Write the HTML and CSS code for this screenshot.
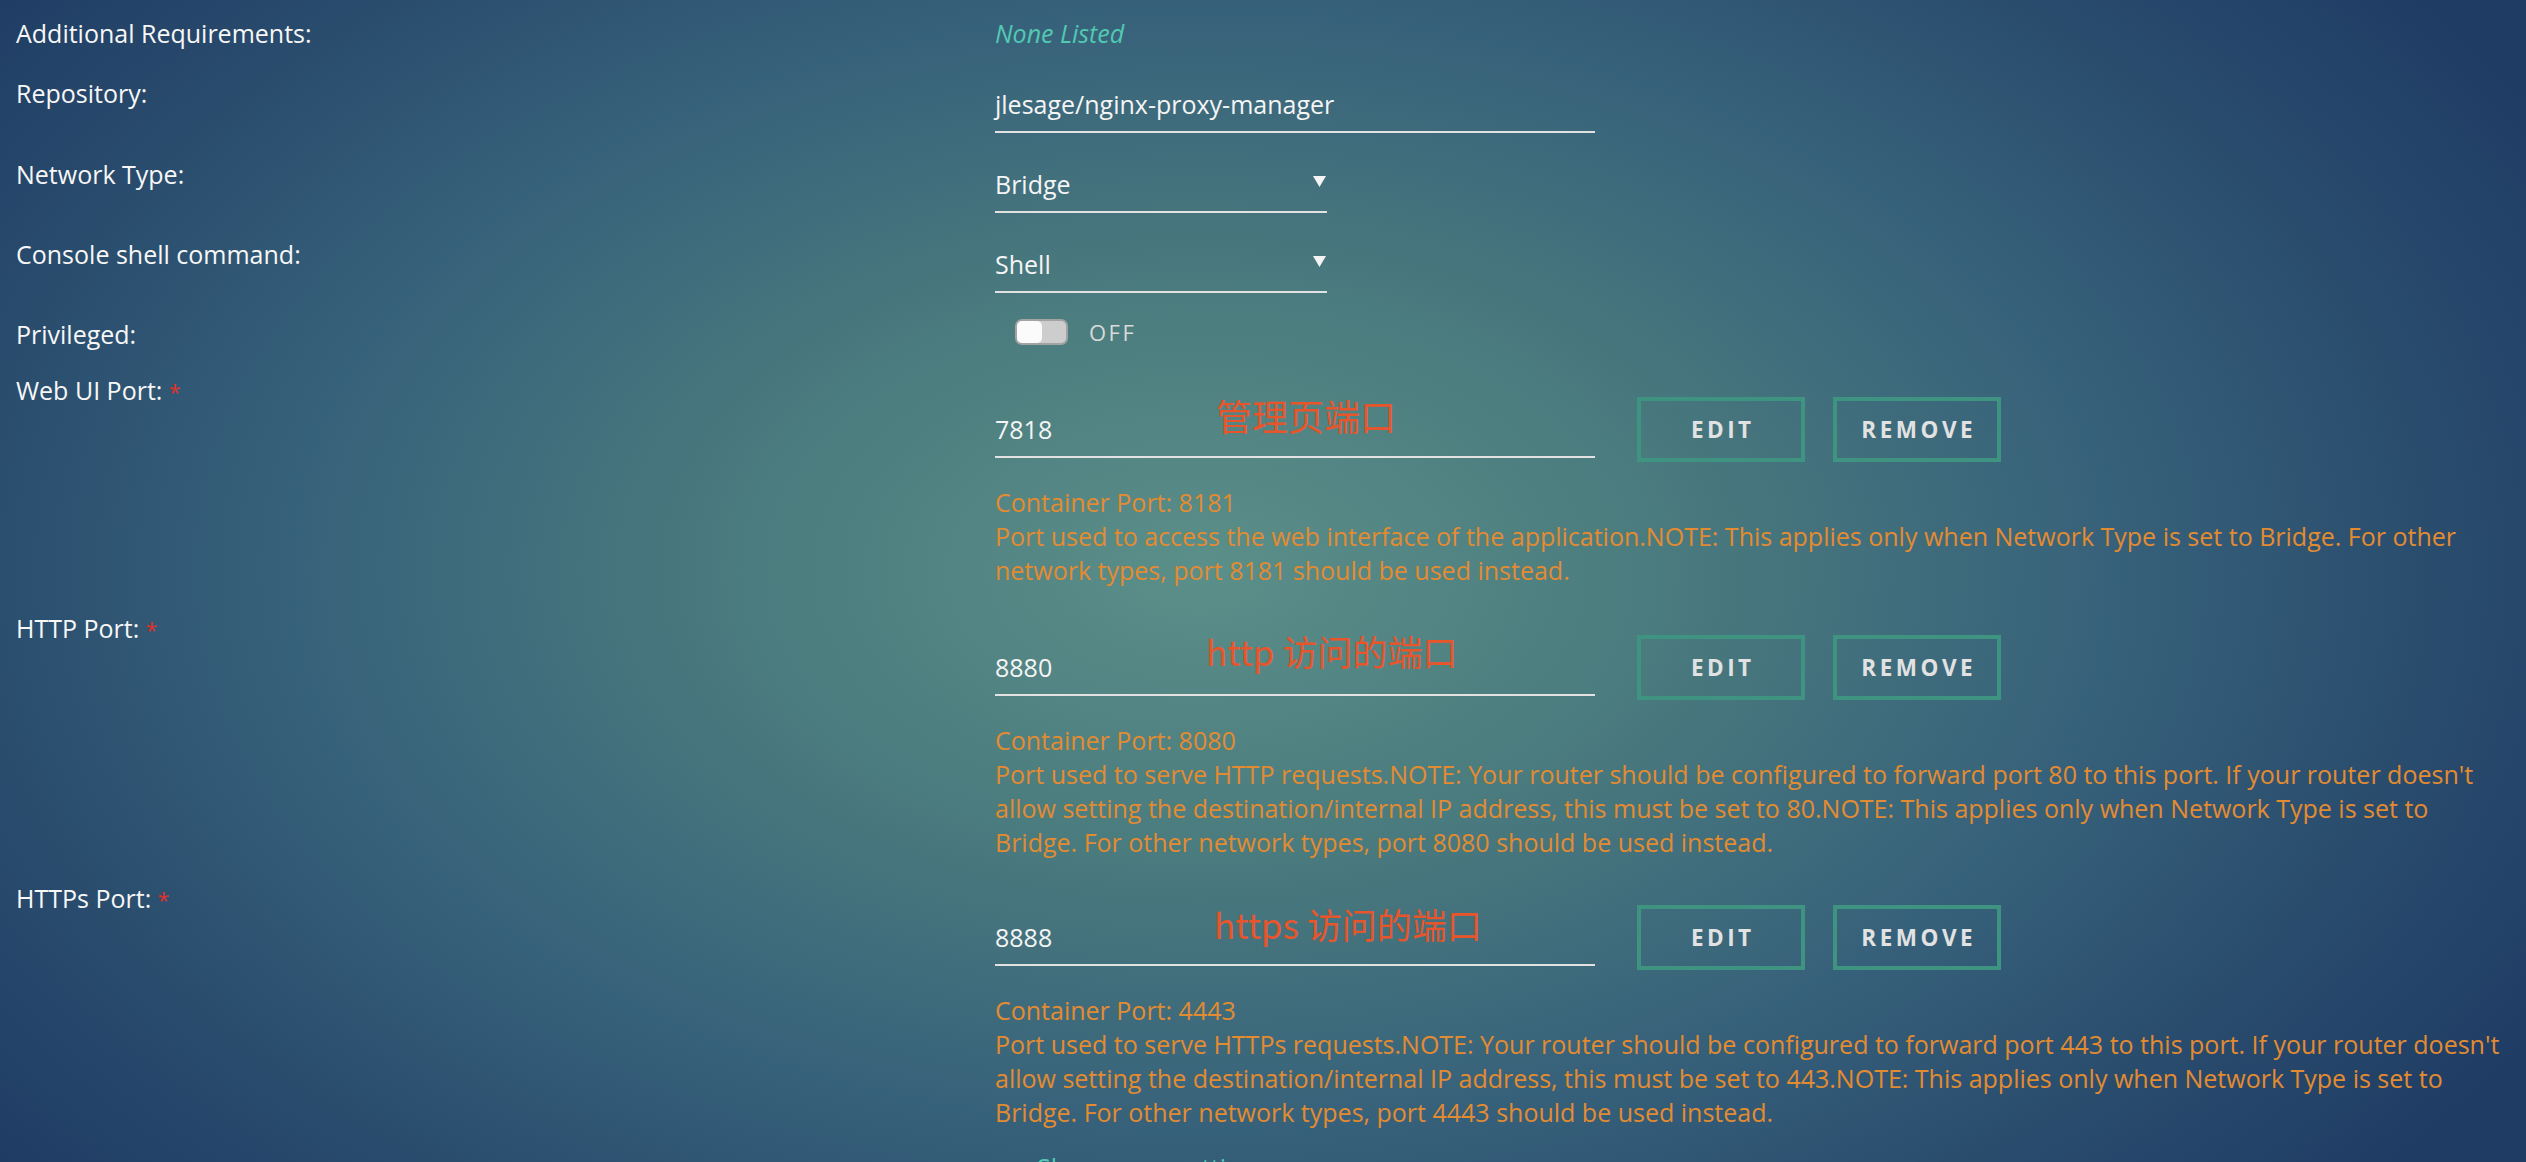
FILE: index.html
```html
<!DOCTYPE html>
<html lang="en">
<head>
<meta charset="utf-8">
<title>Container settings</title>
<link rel="stylesheet" href="styles.css">
</head>
<body>
<div class="form">
  <div class="row row-first">
    <div class="label">Additional Requirements:</div>
    <div class="value"><span class="none">None Listed</span></div>
  </div>
  <div class="row">
    <div class="label">Repository:</div>
    <div class="value"><div class="text-input wide top-input">jlesage/nginx-proxy-manager</div></div>
  </div>
  <div class="row">
    <div class="label">Network Type:</div>
    <div class="value">
      <div class="select">
        <span>Bridge</span>
        <svg class="arrow" width="13" height="11" viewBox="0 0 13 11"><polygon points="0,0 13,0 6.5,11" fill="#f4f4f4"/></svg>
      </div>
    </div>
  </div>
  <div class="row">
    <div class="label">Console shell command:</div>
    <div class="value">
      <div class="select">
        <span>Shell</span>
        <svg class="arrow" width="13" height="11" viewBox="0 0 13 11"><polygon points="0,0 13,0 6.5,11" fill="#f4f4f4"/></svg>
      </div>
    </div>
  </div>
  <div class="row row-priv">
    <div class="label">Privileged:</div>
    <div class="value">
      <div class="switch-wrap">
        <div class="switch"><div class="knob"></div></div>
        <span class="switch-text">OFF</span>
      </div>
    </div>
  </div>
  <div class="row">
    <div class="label">Web UI Port: <span class="req">*</span></div>
    <div class="value">
      <div class="port-line">
        <div class="text-input wide port-input">7818</div>
        <button class="btn btn-edit">Edit</button>
        <button class="btn">Remove</button>
        <span class="note note-ui">管理页端口</span>
      </div>
      <div class="desc">
        <div>Container Port: 8181</div>
        <div>Port used to access the web interface of the application.NOTE: This applies only when Network Type is set to Bridge. For other network types, port 8181 should be used instead.</div>
      </div>
    </div>
  </div>
  <div class="row row-http">
    <div class="label">HTTP Port: <span class="req">*</span></div>
    <div class="value">
      <div class="port-line">
        <div class="text-input wide port-input">8880</div>
        <button class="btn btn-edit">Edit</button>
        <button class="btn">Remove</button>
        <span class="note note-http">http 访问的端口</span>
      </div>
      <div class="desc">
        <div>Container Port: 8080</div>
        <div>Port used to serve HTTP requests.NOTE: Your router should be configured to forward port 80 to this port. If your router doesn't allow setting the destination/internal IP address, this must be set to 80.NOTE: This applies only when Network Type is set to Bridge. For other network types, port 8080 should be used instead.</div>
      </div>
    </div>
  </div>
  <div class="row">
    <div class="label">HTTPs Port: <span class="req">*</span></div>
    <div class="value">
      <div class="port-line">
        <div class="text-input wide port-input">8888</div>
        <button class="btn btn-edit">Edit</button>
        <button class="btn">Remove</button>
        <span class="note note-https">https 访问的端口</span>
      </div>
      <div class="desc">
        <div>Container Port: 4443</div>
        <div>Port used to serve HTTPs requests.NOTE: Your router should be configured to forward port 443 to this port. If your router doesn't allow setting the destination/internal IP address, this must be set to 443.NOTE: This applies only when Network Type is set to Bridge. For other network types, port 4443 should be used instead.</div>
      </div>
    </div>
  </div>
  <div class="row row-more">
    <div class="label"></div>
    <div class="value"><span class="more">Show more settings ...</span></div>
  </div>
</div>
</body>
</html>
```
FILE: styles.css
```css
html, body {
  margin: 0;
  padding: 0;
  width: 2526px;
  height: 1162px;
  overflow: hidden;
}
body {
  background: radial-gradient(ellipse 1550px 950px at 1200px 570px, #5b8f89 0%, #4a7b7e 30%, #36607a 60%, #284a6c 82%, #1f3c64 100%);
  font-family: "Open Sans", "Noto Sans", sans-serif;
  font-size: 25px;
  line-height: 34px;
  color: #f5f5f5;
}
.form {
  display: flex;
  flex-direction: column;
  gap: 24px;
  padding: 16px 0 0 16px;
}
.row {
  display: grid;
  grid-template-columns: 979px 1fr;
}
.row-first {
  margin-bottom: 2px;
}
.row-priv {
  margin-bottom: -2px;
}
.row-http {
  margin-bottom: -2px;
}
.row-more {
  margin-top: -3px;
}
.label {
  color: #f7f7f7;
}
.req {
  color: #e0302a;
  font-size: 21px;
}
.value {
  min-width: 0;
  padding-right: 10px;
}
.none {
  font-style: italic;
  color: #52c9b2;
}
.text-input {
  border-bottom: 2px solid #e2e2e2;
  padding-bottom: 10px;
  color: #f5f5f5;
}
.wide {
  width: 600px;
}
.top-input {
  margin-top: 11px;
}
.select {
  width: 332px;
  margin-top: 10px;
  display: flex;
  justify-content: space-between;
  align-items: center;
  border-bottom: 2px solid #e2e2e2;
  padding-bottom: 10px;
}
.arrow {
  margin-right: 1px;
  margin-top: -6px;
}
.switch-wrap {
  display: flex;
  align-items: center;
  gap: 21px;
  height: 26px;
  margin-top: 2px;
  padding-left: 20px;
}
.switch {
  width: 53px;
  height: 26px;
  box-sizing: border-box;
  border: 2px solid #a3a3a3;
  border-radius: 7px;
  background: #cdcdcd;
  display: flex;
}
.knob {
  width: 25px;
  height: 22px;
  border-radius: 5px;
  background: #fbfbfb;
}
.switch-text {
  font-size: 22px;
  letter-spacing: 2.5px;
  color: #dadada;
  line-height: 26px;
}
.port-line {
  position: relative;
  display: flex;
  align-items: flex-start;
  margin-top: 24px;
}
.port-input {
  margin-top: 15px;
}
.btn {
  width: 168px;
  height: 65px;
  box-sizing: border-box;
  border: 4px solid #3f9381;
  background: transparent;
  color: #e2e2e2;
  font-family: "Open Sans", "Noto Sans", sans-serif;
  font-weight: 700;
  font-size: 22.5px;
  letter-spacing: 3.5px;
  padding: 0 0 0 3.5px;
  text-transform: uppercase;
  margin-left: 28px;
}
.btn-edit {
  margin-left: 42px;
}
.note {
  position: absolute;
  font-family: "Noto Sans CJK SC", "Noto Sans", sans-serif;
  font-size: 35px;
  line-height: 1;
  color: #e9552b;
  white-space: nowrap;
}
.note-ui {
  left: 221px;
  top: 0;
  font-size: 36px;
}
.note-http {
  left: 211px;
  top: -2px;
}
.note-https {
  left: 219px;
  top: 1px;
}
.desc {
  margin-top: 23px;
  color: #e38b31;
  width: 1521px;
}
.more {
  display: inline-block;
  margin-left: 42px;
  color: #52c9b2;
}
```
